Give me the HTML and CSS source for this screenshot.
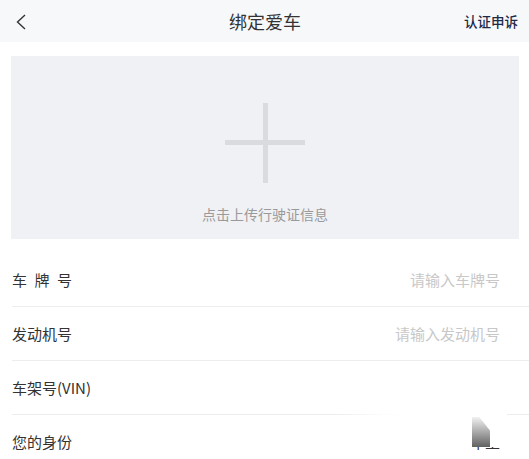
FILE: index.html
```html
<!DOCTYPE html>
<html lang="zh">
<head>
<meta charset="utf-8">
<link rel="stylesheet" href="styles.css">
</head>
<body>
<div class="page">
  <header class="nav">
    <span class="back">
      <svg width="12" height="16" viewBox="0 0 12 16"><path d="M10 1 L2.5 8 L10 15" fill="none" stroke="#333" stroke-width="1.4"/></svg>
    </span>
    <h1 class="title">绑定爱车</h1>
    <span class="appeal">认证申诉</span>
  </header>
  <section class="upload">
    <div class="plus"><span class="ph"></span><span class="pv"></span></div>
    <p class="upload-tip">点击上传行驶证信息</p>
  </section>
  <div class="form">
    <div class="row">
      <span class="label"><span class="sp">车</span><span class="sp">牌</span>号</span>
      <span class="ph-text">请输入车牌号</span>
    </div>
    <div class="row">
      <span class="label">发动机号</span>
      <span class="ph-text">请输入发动机号</span>
    </div>
    <div class="row">
      <span class="label">车架号(VIN)</span>
      <span class="ph-text">请输入车架号</span>
    </div>
    <div class="row">
      <span class="label">您的身份</span>
      <span class="value">车主</span>
    </div>
    <div class="smudge"></div>
    <div class="smudge2"></div>
    <div class="line-fade"></div>
    <div class="blob"></div>
  </div>
</div>
</body>
</html>
```

FILE: styles.css
```css
* { box-sizing: border-box; margin: 0; padding: 0; }
html, body { background: #fff; }
body {
  font-family: "Noto Sans CJK SC", "Noto Sans", sans-serif;
  color: #333;
  overflow: hidden;
}
.page { width: 529px; height: 459px; position: relative; overflow: hidden; }
.nav {
  height: 42px;
  background: #f7f8fa;
  display: flex;
  align-items: center;
  position: relative;
}
.back {
  position: absolute;
  left: 15px;
  top: 14px;
  display: flex;
}
.title {
  flex: 1;
  text-align: center;
  font-size: 18px;
  font-weight: 400;
  color: #333;
  line-height: 42px;
  padding-left: 1px;
}
.appeal {
  position: absolute;
  right: 11px;
  top: 0;
  line-height: 42px;
  font-size: 13.5px;
  font-weight: 500;
  color: #1d2a48;
}
.upload {
  margin: 14px 10px 0 11px;
  height: 183px;
  background: #f0f1f5;
  display: flex;
  flex-direction: column;
  align-items: center;
}
.plus {
  position: relative;
  width: 80px;
  height: 80px;
  margin-top: 47px;
}
.ph { position: absolute; left: 0; top: 37px; width: 80px; height: 5px; background: #dadbde; }
.pv { position: absolute; left: 38px; top: 0; width: 5px; height: 80px; background: #dadbde; }
.upload-tip {
  margin-top: 22px;
  font-size: 14px;
  color: #9a9a9a;
  line-height: 18px;
}
.form { margin-top: 13px; position: relative; }
.row {
  height: 54px;
  margin-left: 12px;
  padding-right: 29px;
  display: flex;
  align-items: center;
  justify-content: space-between;
  border-top: 1px solid #ededed;
}
.row:first-child { border-top: none; }
.label { font-size: 15px; color: #333; letter-spacing: 0; }
.sp { margin-right: 7.5px; }
.ph-text { font-size: 15px; color: #c8c8c8; }
.value { font-size: 15px; color: #333; }
.smudge {
  position: absolute;
  left: 402px;
  top: 127px;
  width: 105px;
  height: 36px;
  background: #fff;
}
.smudge2 {
  position: absolute;
  left: 462px;
  top: 163px;
  width: 67px;
  height: 32px;
  background: #fff;
}
.line-fade {
  position: absolute;
  left: 335px;
  top: 160px;
  width: 127px;
  height: 6px;
  background: linear-gradient(90deg, rgba(255,255,255,0), rgba(255,255,255,0.9) 40%, #fff);
}
.blob {
  position: absolute;
  left: 472px;
  top: 165px;
  width: 18px;
  height: 30px;
  background: linear-gradient(180deg, rgba(120,120,120,0.1), rgba(70,70,70,0.85));
  clip-path: polygon(0 0, 40% 0, 100% 45%, 100% 100%, 0 100%);
}
```
